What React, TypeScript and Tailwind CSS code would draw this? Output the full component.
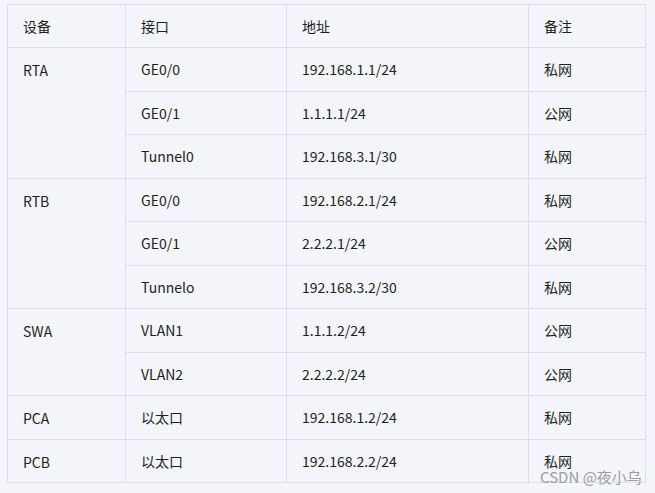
const rows: { dev?: string; span?: number; port: string; addr: string; note: string }[] = [
  { dev: "RTA", span: 3, port: "GE0/0", addr: "192.168.1.1/24", note: "私网" },
  { port: "GE0/1", addr: "1.1.1.1/24", note: "公网" },
  { port: "Tunnel0", addr: "192.168.3.1/30", note: "私网" },
  { dev: "RTB", span: 3, port: "GE0/0", addr: "192.168.2.1/24", note: "私网" },
  { port: "GE0/1", addr: "2.2.2.1/24", note: "公网" },
  { port: "Tunnelo", addr: "192.168.3.2/30", note: "私网" },
  { dev: "SWA", span: 2, port: "VLAN1", addr: "1.1.1.2/24", note: "公网" },
  { port: "VLAN2", addr: "2.2.2.2/24", note: "公网" },
  { dev: "PCA", span: 1, port: "以太口", addr: "192.168.1.2/24", note: "私网" },
  { dev: "PCB", span: 1, port: "以太口", addr: "192.168.2.2/24", note: "私网" },
];

const cell = "border border-[#dcdfe6] px-[15px] align-middle";

export default function App() {
  return (
    <div
      className="relative w-[655px] h-[493px] bg-[#f3f5fa] pt-[4px] pl-[7px] text-[14px] text-[#1f1f23]"
      style={{ fontFamily: '"Noto Sans CJK SC", "Noto Sans", sans-serif' }}
    >
      <table className="border-collapse w-[638px] table-fixed">
        <colgroup>
          <col className="w-[118px]" />
          <col className="w-[161px]" />
          <col className="w-[242px]" />
          <col className="w-[117px]" />
        </colgroup>
        <thead>
          <tr className="h-[43px]">
            <th className={`${cell} text-left font-normal`}>设备</th>
            <th className={`${cell} text-left font-normal`}>接口</th>
            <th className={`${cell} text-left font-normal`}>地址</th>
            <th className={`${cell} text-left font-normal`}>备注</th>
          </tr>
        </thead>
        <tbody>
          {rows.map((r, i) => (
            <tr key={i} className={i % 2 === 0 ? "h-[44px]" : "h-[43px]"}>
              {r.dev && (
                <td rowSpan={r.span} className={`${cell} align-top pt-[12px]`}>
                  {r.dev}
                </td>
              )}
              <td className={cell}>{r.port}</td>
              <td className={cell}>{r.addr}</td>
              <td className={cell}>{r.note}</td>
            </tr>
          ))}
        </tbody>
      </table>
      <div className="absolute left-[540px] top-[469px] text-[15px] text-[#9d9da3] leading-none">
        CSDN @夜小乌
      </div>
    </div>
  );
}
